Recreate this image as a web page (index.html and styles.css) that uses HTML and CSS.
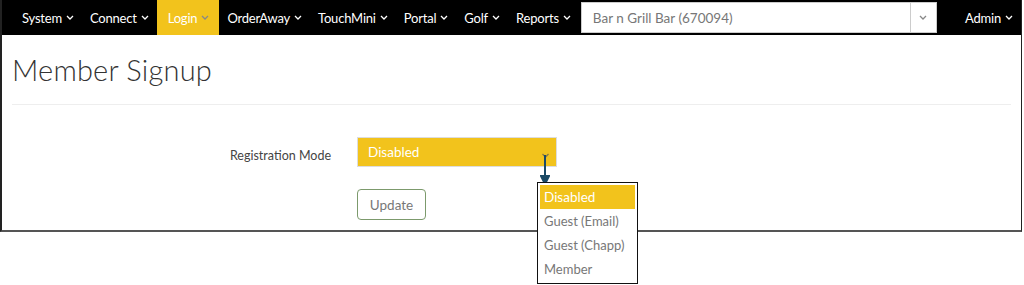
FILE: index.html
```html
<!DOCTYPE html>
<html lang="en">
<head>
    <meta charset="UTF-8">
    <title>Member Signup</title>
    <link rel="stylesheet" href="styles.css">
</head>
<body>

<div class="frame">
    <div class="navbar">
        <div class="nav-item">System <svg class="chev" viewBox="0 0 8 5"><polyline points="1,1 4,4 7,1"/></svg></div>
        <div class="nav-item">Connect <svg class="chev" viewBox="0 0 8 5"><polyline points="1,1 4,4 7,1"/></svg></div>
        <div class="nav-item active">Login <svg class="chev" viewBox="0 0 8 5"><polyline points="1,1 4,4 7,1"/></svg></div>
        <div class="nav-item">OrderAway <svg class="chev" viewBox="0 0 8 5"><polyline points="1,1 4,4 7,1"/></svg></div>
        <div class="nav-item">TouchMini <svg class="chev" viewBox="0 0 8 5"><polyline points="1,1 4,4 7,1"/></svg></div>
        <div class="nav-item">Portal <svg class="chev" viewBox="0 0 8 5"><polyline points="1,1 4,4 7,1"/></svg></div>
        <div class="nav-item">Golf <svg class="chev" viewBox="0 0 8 5"><polyline points="1,1 4,4 7,1"/></svg></div>
        <div class="nav-item">Reports <svg class="chev" viewBox="0 0 8 5"><polyline points="1,1 4,4 7,1"/></svg></div>

        <div class="site-select">
            <span class="site-name">Bar n Grill Bar (670094)</span>
            <span class="site-toggle"><svg class="chev" viewBox="0 0 8 5"><polyline points="1,1 4,4 7,1"/></svg></span>
        </div>

        <div class="nav-item admin">Admin <svg class="chev" viewBox="0 0 8 5"><polyline points="1,1 4,4 7,1"/></svg></div>
    </div>

    <div class="page-header">
        <h1>Member Signup</h1>
    </div>

    <div class="form-grid">
        <label class="form-label">Registration Mode</label>
        <div class="mode-select">
            <span>Disabled</span>
            <svg class="chev" viewBox="0 0 8 5"><polyline points="1,1 4,4 7,1"/></svg>
            <!-- callout arrow + open option list -->
            <svg class="callout" viewBox="0 0 10 30"><line x1="5" y1="0" x2="5" y2="22"/><polygon points="1,21 9,21 5,29"/></svg>
            <ul class="options">
                <li class="selected">Disabled</li>
                <li>Guest (Email)</li>
                <li>Guest (Chapp)</li>
                <li>Member</li>
            </ul>
        </div>

        <div></div>
        <div><button class="btn-update">Update</button></div>
    </div>
</div>

</body>
</html>
```

FILE: styles.css
```css
html, body {
    min-height: 285px;
}

body {
    margin: 0;
    background-color: white;
    font-family: 'Lato', 'Liberation Sans', sans-serif;
    color: #333;
}

.frame {
    width: 1019px;
    height: 230px;
    border-left: 2px solid #222;
    border-right: 1px solid #222;
    border-bottom: 2px solid #555;
    position: relative;
}

.navbar {
    display: flex;
    align-items: center;
    height: 35px;
    background-color: #000;
    padding-left: 12px;
    border-right: 1px solid #000;
}

.nav-item {
    height: 35px;
    display: flex;
    align-items: center;
    padding: 0 8px;
    color: white;
    font-size: 13px;
    letter-spacing: -0.2px;
}

.nav-item.active {
    background-color: #f2c31c;
    color: #fff;
    padding: 0 10px 0 11px;
}

.nav-item.active .chev {
    stroke: #888;
}

.chev {
    width: 8px;
    height: 5px;
    margin-left: 4px;
    fill: none;
    stroke: white;
    stroke-width: 1.3;
}

.site-select {
    display: flex;
    align-items: center;
    width: 354px;
    height: 29px;
    margin-left: 2px;
    background-color: white;
    border: 1px solid #ccc;
}

.site-name {
    flex: 1;
    padding-left: 11px;
    color: #777;
    font-size: 13.5px;
}

.site-toggle {
    width: 25px;
    height: 29px;
    display: flex;
    align-items: center;
    justify-content: center;
    border-left: 1px solid #ccc;
}

.site-toggle .chev {
    stroke: #888;
    margin-left: 0;
}

.nav-item.admin {
    margin-left: auto;
    padding-right: 7px;
}

.page-header {
    margin: 0 10px;
    height: 69px;
    border-bottom: 1px solid #eee;
}

h1 {
    margin: 0;
    padding-top: 17px;
    font-size: 29px;
    font-weight: 300;
    color: #333;
    letter-spacing: 0.2px;
}

.form-grid {
    display: grid;
    grid-template-columns: 329px 200px;
    column-gap: 26px;
    row-gap: 22px;
    margin-top: 32px;
}

.form-label {
    text-align: right;
    align-self: center;
    font-size: 12.5px;
    color: #444;
    padding-top: 7px;
}

.mode-select {
    position: relative;
    display: flex;
    align-items: center;
    justify-content: space-between;
    height: 28px;
    padding: 0 6px 0 10px;
    background-color: #f2c31c;
    border: 1px solid #ddd;
    color: white;
    font-size: 13.5px;
}

.mode-select .chev {
    stroke: #8a7a40;
    width: 9px;
    margin-top: 6px;
}

.callout {
    position: absolute;
    left: 182px;
    top: 17px;
    width: 10px;
    height: 30px;
    stroke: #1b4a66;
    stroke-width: 2;
    fill: #1b4a66;
}

.options {
    position: absolute;
    left: 179px;
    top: 44px;
    width: 95px;
    margin: 0;
    padding: 2px;
    list-style-type: none;
    background-color: white;
    border: 1px solid #111;
    z-index: 10;
}

.options li {
    height: 24px;
    line-height: 24px;
    padding-left: 4px;
    color: #777;
    font-size: 13px;
}

.options li.selected {
    background-color: #f2c31c;
    color: white;
    font-size: 13.5px;
}

.btn-update {
    width: 69px;
    height: 31px;
    background-color: white;
    border: 1px solid #7c9a6c;
    border-radius: 4px;
    color: #777;
    font-family: 'Lato', 'Liberation Sans', sans-serif;
    font-size: 13.5px;
    cursor: pointer;
}
```
